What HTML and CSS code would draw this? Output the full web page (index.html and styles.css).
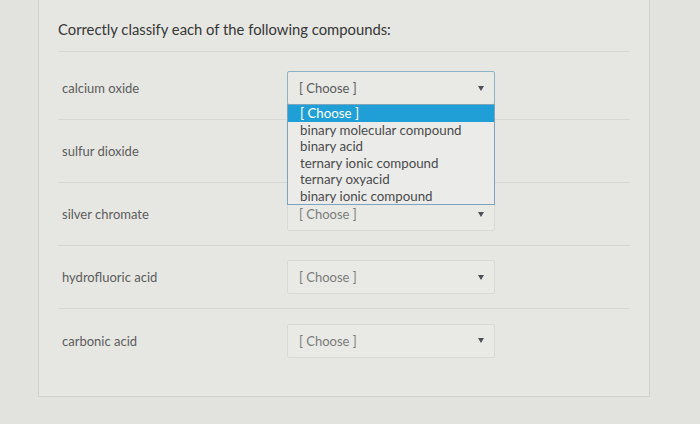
FILE: index.html
```html
<!DOCTYPE html>
<html>
<head>
<meta charset="utf-8">
<link rel="stylesheet" href="styles.css">
</head>
<body>
<div class="page">
  <div class="box">
    <div class="title">Correctly classify each of the following compounds:</div>
    <div class="rows">
      <div class="row">
        <div class="label">calcium oxide</div>
        <div class="select-wrap">
          <div class="select focused"><span>[ Choose ]</span><i class="arrow"></i></div>
          <ul class="menu">
            <li class="hl">[ Choose ]</li>
            <li>binary molecular compound</li>
            <li>binary acid</li>
            <li>ternary ionic compound</li>
            <li>ternary oxyacid</li>
            <li>binary ionic compound</li>
          </ul>
        </div>
      </div>
      <div class="row">
        <div class="label">sulfur dioxide</div>
        <div class="select-wrap">
          <div class="select covered"><span>[ Choose ]</span><i class="arrow"></i></div>
        </div>
      </div>
      <div class="row">
        <div class="label">silver chromate</div>
        <div class="select-wrap">
          <div class="select"><span>[ Choose ]</span><i class="arrow"></i></div>
        </div>
      </div>
      <div class="row">
        <div class="label">hydrofluoric acid</div>
        <div class="select-wrap">
          <div class="select"><span>[ Choose ]</span><i class="arrow"></i></div>
        </div>
      </div>
      <div class="row last">
        <div class="label">carbonic acid</div>
        <div class="select-wrap">
          <div class="select"><span>[ Choose ]</span><i class="arrow"></i></div>
        </div>
      </div>
    </div>
  </div>
</div>
</body>
</html>
```

FILE: styles.css
```css
html, body {
  margin: 0;
  padding: 0;
  background: #e2e2de;
  font-family: Lato, "Open Sans", sans-serif;
}
.page {
  width: 700px;
  height: 424px;
  overflow: hidden;
  padding-left: 38px;
  box-sizing: border-box;
}
.box {
  width: 612px;
  box-sizing: border-box;
  border: 1px solid #cfd2d1;
  border-top: none;
  background: #e6e7e3;
  padding: 0 19px 24px;
}
.title {
  height: 52px;
  box-sizing: border-box;
  padding: 19px 0 0 0;
  font-size: 14.8px;
  line-height: 20px;
  color: #363636;
  border-bottom: 1px solid #d6d8d6;
}
.rows {
  padding-top: 5px;
}
.row {
  height: 63px;
  box-sizing: border-box;
  border-bottom: 1px solid #d6d8d6;
  display: flex;
  align-items: center;
  padding-left: 4px;
}
.row.last {
  border-bottom: none;
}
.label {
  width: 225px;
  font-size: 13px;
  color: #5c5c5c;
}
.select-wrap {
  position: relative;
}
.select {
  width: 208px;
  height: 34px;
  box-sizing: border-box;
  border: 1px solid #d9dad6;
  border-radius: 2px;
  background: #e9eae6;
  display: flex;
  align-items: center;
  justify-content: space-between;
  padding: 0 10px 0 11px;
  font-size: 13px;
  color: #7b7b7b;
}
.select.focused {
  border-color: #8db2c6;
  color: #5a5a5a;
}
.select.covered > * {
  visibility: hidden;
}
.arrow {
  width: 0;
  height: 0;
  border-left: 3px solid transparent;
  border-right: 3px solid transparent;
  border-top: 5px solid #4a4f58;
}
.menu {
  position: absolute;
  left: 0;
  top: 33px;
  width: 208px;
  box-sizing: border-box;
  margin: 0;
  padding: 0;
  list-style: none;
  border: 1px solid #7ea4bb;
  background: #ebecea;
  z-index: 5;
}
.menu li {
  height: 16.5px;
  line-height: 16.5px;
  padding-left: 12px;
  font-size: 13.3px;
  color: #4a4a4a;
  white-space: nowrap;
}
.menu li.hl {
  background: #1f9fd5;
  color: #ffffff;
}
```
